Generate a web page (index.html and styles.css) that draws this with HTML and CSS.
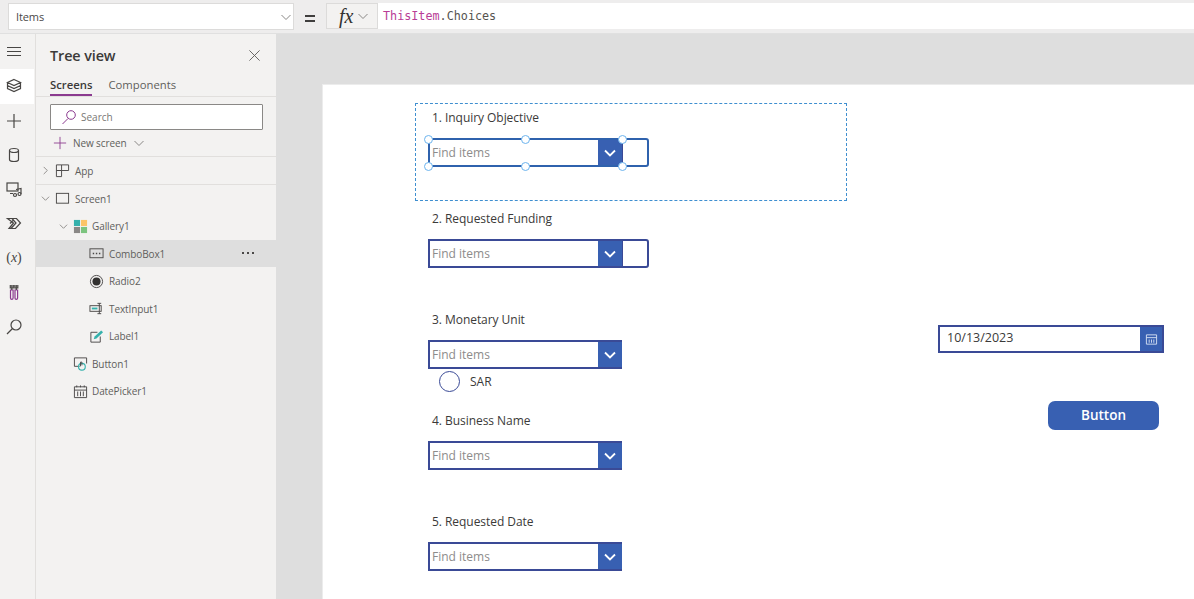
FILE: index.html
```html
<!DOCTYPE html>
<html lang="en">
<head>
<meta charset="utf-8">
<title>Tree view</title>
<link rel="stylesheet" href="styles.css">
</head>
<body>
<div class="app">
  <header class="formula-bar">
    <div class="prop-select">
      <span class="prop-name">Items</span>
      <svg class="chev-sm" viewBox="0 0 12 12"><path d="M1.5 4l4.5 4.5L10.500 4" /></svg>
    </div>
    <div class="equals"><span></span><span></span></div>
    <div class="fx-btn">
      <span class="fx">fx</span>
      <svg class="chev-sm" viewBox="0 0 12 12"><path d="M1.5 4l4.500 4.500L10.500 4" /></svg>
    </div>
    <div class="formula"><span class="kw">ThisItem</span>.Choices</div>
  </header>
  <div class="main">
    <nav class="rail">
      <div class="rail-item"><svg viewBox="0 0 20 20"><path class="st" d="M3 5.500h14M3 9.500h14M3 13.500h14"/></svg></div>
      <div class="rail-item active"><svg viewBox="0 0 20 20"><path class="st" d="M10 3.500l6.500 3-6.500 3-6.500-3zM3.500 6.500v3l6.500 3 6.500-3v-3M3.500 9.500v3l6.500 3 6.500-3v-3"/></svg></div>
      <div class="rail-item"><svg viewBox="0 0 20 20"><path class="st" d="M10 3v14M3 10h14"/></svg></div>
      <div class="rail-item"><svg viewBox="0 0 20 20"><ellipse class="st" cx="10" cy="5.500" rx="4.500" ry="2"/><path class="st" d="M5.500 5.500v9c0 1.200 2 2 4.500 2s4.500-.8 4.500-2v-9"/></svg></div>
      <div class="rail-item"><svg viewBox="0 0 20 20"><rect class="st" x="3" y="4" width="11" height="8"/><path class="st" d="M6 14.500h3M12 10.500l5-1v5.500"/><circle class="st" cx="11" cy="16" r="1.500"/><circle class="st" cx="15.500" cy="15" r="1.500"/></svg></div>
      <div class="rail-item"><svg viewBox="0 0 20 20"><path class="st" d="M3.500 4.500h9l4 4.500-5 5.500H5l4.500-5.500zM8 4.500l4 4.500-5 5.500M6 9.500l3-3"/></svg></div>
      <div class="rail-item rail-x">(<i>x</i>)</div>
      <div class="rail-item"><svg viewBox="0 0 20 20"><path class="st-purple" d="M6.500 8v8a1.300 1.300 0 0 0 2.600 0V8zM11 8v8a1.300 1.300 0 0 0 2.600 0V8z"/><path class="st" d="M7.800 8V3M12.300 8V3M6.300 3v3h3V3M10.800 3v3h3V3"/></svg></div>
      <div class="rail-item"><svg viewBox="0 0 20 20"><circle class="st" cx="12" cy="8" r="5"/><path class="st" d="M8.500 11.500L3 17"/></svg></div>
    </nav>
    <aside class="panel">
      <div class="panel-head">
        <h1>Tree view</h1>
        <svg class="close" viewBox="0 0 14 14"><path d="M1.500 1.500l11 11M12.500 1.500l-11 11"/></svg>
      </div>
      <div class="tabs">
        <span class="tab on">Screens</span>
        <span class="tab">Components</span>
      </div>
      <div class="search">
        <svg viewBox="0 0 16 16"><circle cx="10" cy="6" r="4.300"/><path d="M7 9.500L1.500 15"/></svg>
        <span>Search</span>
      </div>
      <div class="new-screen">
        <svg class="plus" viewBox="0 0 16 16"><path d="M8 1v14M1 8h14"/></svg>
        <span>New screen</span>
        <svg class="chev-sm" viewBox="0 0 12 12"><path d="M1.500 4l4.500 4.500L10.500 4" /></svg>
      </div>
      <ul class="tree">
        <li class="row lvl0 sep">
          <svg class="twist" viewBox="0 0 10 10"><path d="M3 1l4 4-4 4"/></svg>
          <svg class="ico" viewBox="0 0 16 16"><path class="o" d="M1.500 2h5.500v6H1.500zM7 2h7.500v6H7M1.500 8h5.500v6.500H1.500z"/></svg>
          <span>App</span>
        </li>
        <li class="row lvl0">
          <svg class="twist" viewBox="0 0 10 10"><path d="M1 3l4 4 4-4"/></svg>
          <svg class="ico wide" viewBox="0 0 16 14"><rect class="o" x="1.500" y="1.500" width="13" height="10.500"/></svg>
          <span>Screen1</span>
        </li>
        <li class="row lvl1">
          <svg class="twist" viewBox="0 0 10 10"><path d="M1 3l4 4 4-4"/></svg>
          <svg class="ico" viewBox="0 0 16 16"><rect x="1" y="1" width="6.500" height="6.500" fill="#35b1ac"/><rect x="8.500" y="1" width="6.500" height="6.500" fill="#fcc468"/><rect x="1" y="8.500" width="6.500" height="6.500" fill="#8a8886"/><rect x="8.500" y="8.500" width="6.500" height="6.500" fill="#7cc47f"/></svg>
          <span>Gallery1</span>
        </li>
        <li class="row lvl2 selected">
          <svg class="ico" viewBox="0 0 16 16"><rect class="o" x="1" y="3" width="14" height="9.500"/><path class="dots" d="M4 8h1.500M7.300 8h1.500M10.600 8h1.500"/></svg>
          <span>ComboBox1</span>
          <span class="more"><i></i><i></i><i></i></span>
        </li>
        <li class="row lvl2">
          <svg class="ico" viewBox="0 0 16 16"><circle class="o" cx="8" cy="8" r="6.500"/><circle cx="8" cy="8" r="4.300" fill="#323130"/></svg>
          <span>Radio2</span>
        </li>
        <li class="row lvl2">
          <svg class="ico" viewBox="0 0 16 16"><rect class="o" x="1" y="5" width="12" height="6"/><rect x="3" y="7" width="6" height="2" fill="#35b1ac"/><path class="o bg" d="M9 2.500h4M11 2.500v11M9 13.500h4"/></svg>
          <span>TextInput1</span>
        </li>
        <li class="row lvl2">
          <svg class="ico" viewBox="0 0 16 16"><path class="o" d="M12 8v6H2V3.500h7"/><path d="M5 11l1-3 7-6.500 2 2L8 10z" fill="#35b1ac"/></svg>
          <span>Label1</span>
        </li>
        <li class="row lvl1b">
          <svg class="ico" viewBox="0 0 16 16"><path class="o" d="M7 11H1.500V2h13v6"/><circle cx="9.500" cy="11.500" r="3.600" fill="none" stroke="#35b1ac" stroke-width="1.200"/><path class="o" d="M8 11V6.500h1.500V10"/></svg>
          <span>Button1</span>
        </li>
        <li class="row lvl1b">
          <svg class="ico" viewBox="0 0 16 16"><path class="o" d="M1.500 3h13v11.500h-13zM1.500 6.500h13M4 1.500v2M8 1.500v2M12 1.500v2M5 8v5M8 8v5M11 8v5"/></svg>
          <span>DatePicker1</span>
        </li>
      </ul>
    </aside>
    <section class="workspace">
      <div class="canvas">
        <div class="gallery">
          <div class="g-item">
            <div class="g-label">1. Inquiry Objective</div>
            <div class="combo-wrap">
              <div class="combo extra selected-combo">
                <span class="ph">Find items</span>
                <span class="drop"><svg viewBox="0 0 14 14"><path d="M2 4.500l5 5 5-5"/></svg></span>
                <span class="tail"></span>
              </div>
              <i class="h tl"></i><i class="h tm"></i><i class="h tr"></i>
              <i class="h bl"></i><i class="h bm"></i><i class="h br"></i>
            </div>
          </div>
          <div class="g-item">
            <div class="g-label">2. Requested Funding</div>
            <div class="combo-wrap">
              <div class="combo extra">
                <span class="ph">Find items</span>
                <span class="drop"><svg viewBox="0 0 14 14"><path d="M2 4.500l5 5 5-5"/></svg></span>
                <span class="tail"></span>
              </div>
            </div>
          </div>
          <div class="g-item">
            <div class="g-label">3. Monetary Unit</div>
            <div class="combo-wrap">
              <div class="combo">
                <span class="ph">Find items</span>
                <span class="drop"><svg viewBox="0 0 14 14"><path d="M2 4.500l5 5 5-5"/></svg></span>
              </div>
            </div>
            <div class="radio"><span class="circle"></span><span>SAR</span></div>
          </div>
          <div class="g-item">
            <div class="g-label">4. Business Name</div>
            <div class="combo-wrap">
              <div class="combo">
                <span class="ph">Find items</span>
                <span class="drop"><svg viewBox="0 0 14 14"><path d="M2 4.500l5 5 5-5"/></svg></span>
              </div>
            </div>
          </div>
          <div class="g-item">
            <div class="g-label">5. Requested Date</div>
            <div class="combo-wrap">
              <div class="combo">
                <span class="ph">Find items</span>
                <span class="drop"><svg viewBox="0 0 14 14"><path d="M2 4.500l5 5 5-5"/></svg></span>
              </div>
            </div>
          </div>
        </div>
        <div class="datepicker">
          <span class="date-val">10/13/2023</span>
          <span class="cal"><svg viewBox="0 0 14 14"><path d="M1.500 2h11v10h-11zM1.500 5h11M4.500 7v3.500M7 7v3.500M9.500 7v3.500"/></svg></span>
        </div>
        <div class="btn">Button</div>
      </div>
    </section>
  </div>
</div>
</body>
</html>
```
FILE: styles.css
```css
* { box-sizing: border-box; }
html, body { margin: 0; padding: 0; height: 100%; overflow: hidden; }
body { font-family: "Open Sans", "Noto Sans", sans-serif; color: #323130; background: #f3f2f1; }
.app { width: 1194px; height: 599px; display: flex; flex-direction: column; overflow: hidden; }

/* formula bar */
.formula-bar { height: 34px; flex: none; display: flex; align-items: flex-start; padding-top: 3px; background: #eeeded; border-bottom: 1px solid #e0e0e0; }
.chev-sm { width: 12px; height: 12px; fill: none; stroke: #8a8886; stroke-width: 1; }
.prop-select { width: 286px; height: 27px; margin-left: 8px; background: #fff; border: 1px solid #dcdbda; display: flex; align-items: center; justify-content: space-between; padding: 0 1px 0 7px; }
.prop-name { font-size: 11px; color: #4a4847; letter-spacing: -0.1px; }
.equals { width: 32px; height: 28px; display: flex; flex-direction: column; align-items: center; justify-content: center; gap: 3px; padding-top: 3px; }
.equals span { display: block; width: 10px; height: 2px; background: #3f3e3d; }
.fx-btn { width: 52px; height: 26px; background: #f3f2f1; border: 1px solid #dcdbda; display: flex; align-items: center; padding-left: 12px; gap: 4px; }
.fx { font-family: "Liberation Serif", serif; font-style: italic; font-size: 20px; line-height: 20px; color: #323130; }
.formula { flex: 1; height: 26px; background: #fff; font-family: "DejaVu Sans Mono", "Liberation Mono", monospace; font-size: 11.750px; line-height: 26px; padding-left: 5px; color: #55534f; }
.kw { color: #b83d96; }

.main { flex: 1; display: flex; min-height: 0; }

/* rail */
.rail { width: 36px; flex: none; border-right: 1px solid #e1dfdd; padding-top: 1px; background: #f3f2f1; }
.rail-item { width: 34px; height: 34.300px; display: flex; align-items: center; justify-content: center; padding-right: 6px; }
.rail-item svg { width: 20px; height: 20px; flex: none; }
.rail-item.active { background: #fff; }
.st { fill: none; stroke: #484644; stroke-width: 1.200; }
.st-purple { fill: none; stroke: #8b3a8f; stroke-width: 1.200; }
.rail-x { font-family: "Liberation Serif", serif; font-size: 14px; color: #484644; }

/* panel */
.panel { width: 241px; flex: none; border-right: 1px solid #dedede; background: #f3f2f1; display: flex; flex-direction: column; }
.panel-head { height: 36px; padding: 6px 15px 0 14px; display: flex; align-items: center; justify-content: space-between; }
.panel-head h1 { margin: 0; font-size: 14.400px; font-weight: 600; color: #3b3a39; letter-spacing: -0.1px; }
.close { width: 13px; height: 13px; fill: none; stroke: #605e5c; stroke-width: 1; }
.tabs { height: 27px; padding: 0 0 0 14px; display: flex; gap: 16px; align-items: stretch; border-bottom: 1px solid #e1dfdd; }
.tab { font-size: 11.300px; line-height: 20px; padding-top: 5px; color: #605e5c; }
.tab.on { font-weight: 600; color: #3b3a39; border-bottom: 2px solid #8b3a8f; }
.search { margin: 7px 0 0 14px; width: 213px; height: 26px; background: #fff; border: 1px solid #8a8886; display: flex; align-items: center; padding-left: 10px; gap: 4px; border-radius: 1px; }
.search svg { width: 16px; height: 16px; fill: none; stroke: #8b3a8f; stroke-width: 1; }
.search span { font-size: 10px; color: #797775; }
.new-screen { height: 27px; padding-left: 17px; display: flex; align-items: center; gap: 6px; border-bottom: 1px solid #e1dfdd; }
.plus { width: 14px; height: 14px; fill: none; stroke: #8b3a8f; stroke-width: 1; }
.new-screen span { font-size: 10px; letter-spacing: -0.1px; color: #605e5c; }
.tree { list-style: none; margin: 0; padding: 0; }
.row { height: 27.500px; padding-top: 1px; display: flex; align-items: center; font-size: 10px; letter-spacing: -0.1px; color: #605e5c; position: relative; }
.row.sep { border-bottom: 1px solid #e1dfdd; }
.twist { width: 9px; height: 9px; fill: none; stroke: #8a8886; stroke-width: 1; flex: none; }
.ico { width: 15px; height: 15px; flex: none; }
.o { fill: none; stroke: #4a4847; stroke-width: 1; }
.dots { stroke: #4a4847; stroke-width: 1.400; fill: none; }
.lvl0 { padding-left: 5px; }
.lvl0 .ico { margin-left: 5px; margin-right: 5px; }
.lvl1 { padding-left: 23px; }
.lvl1 .ico { margin-left: 5px; margin-right: 4px; }
.lvl1b { padding-left: 37px; }
.lvl1b .ico { margin-right: 4px; }
.lvl2 { padding-left: 53px; }
.lvl2 .ico { margin-right: 5px; }
.selected { background: #dedede; }
.more { position: absolute; left: 206px; top: 12px; display: flex; gap: 3px; }
.more i { width: 2px; height: 2px; background: #4a4847; display: block; }

/* workspace */
.workspace { flex: 1; min-width: 0; background: #dedede; padding: 51px 0 0 46px; }
.canvas { position: relative; width: 871px; height: 514px; background: #fff; box-shadow: 0 0 0 1px #ececec; }
.gallery { position: absolute; left: 92px; top: 18px; width: 431px; font-size: 12px; }
.gallery::before { content: ""; position: absolute; left: 0; top: 0; width: 430px; height: 96px; border: 1px dashed #3f8fd0; }
.g-item { height: 101px; padding-left: 13px; position: relative; }
.g-label { height: 28px; padding: 6px 0 0 4px; font-size: 12px; line-height: 18px; color: #3b3a39; letter-spacing: -0.05px; }
.combo-wrap { position: relative; margin-top: 7px; width: 194px; height: 29px; }
.combo { width: 194px; height: 29px; border: 2px solid #3a4a96; display: flex; background: #fff; position: relative; }
.combo.extra { width: 221px; border-radius: 0 3px 3px 0; }
.ph { flex: none; width: 168px; font-size: 12px; line-height: 25px; padding-left: 2px; color: #8d8c8b; }
.drop { flex: none; width: 24px; height: 25px; background: #3860b2; display: flex; align-items: center; justify-content: center; }
.drop svg { width: 14px; height: 14px; fill: none; stroke: #fff; stroke-width: 1.800; }
.tail { flex: none; width: 25px; border-left: 1px solid #3a4a96; }
.selected-combo { border-color: #2f62ad; }
.h { position: absolute; width: 9px; height: 9px; border-radius: 50%; background: #fff; border: 1.500px solid #6cb4ee; }
.tl { left: -4px; top: -3px; }
.tm { left: 93px; top: -3px; }
.tr { left: 190px; top: -3px; }
.bl { left: -4px; top: 24px; }
.bm { left: 93px; top: 24px; }
.br { left: 190px; top: 24px; }
.radio { position: absolute; left: 24px; top: 66px; display: flex; align-items: center; gap: 10px; font-size: 12px; color: #3b3a39; }
.circle { width: 21px; height: 21px; border: 1.500px solid #3a4a96; border-radius: 50%; background: #fff; }

.datepicker { position: absolute; left: 615px; top: 240px; width: 226px; height: 28px; background: #fff; border: 2px solid #3a4a96; display: flex; justify-content: space-between; align-items: stretch; }
.date-val { font-size: 12.500px; line-height: 22px; padding-left: 7px; color: #3b3a39; }
.cal { width: 22px; background: #3860b2; display: flex; align-items: center; justify-content: center; }
.cal svg { width: 13px; height: 13px; fill: none; stroke: #d5e0f2; stroke-width: 1; }
.btn { position: absolute; left: 725px; top: 316px; width: 111px; height: 29px; background: #3860b2; border-radius: 7px; color: #fff; font-size: 13.500px; font-weight: 600; text-align: center; line-height: 28px; }
```
